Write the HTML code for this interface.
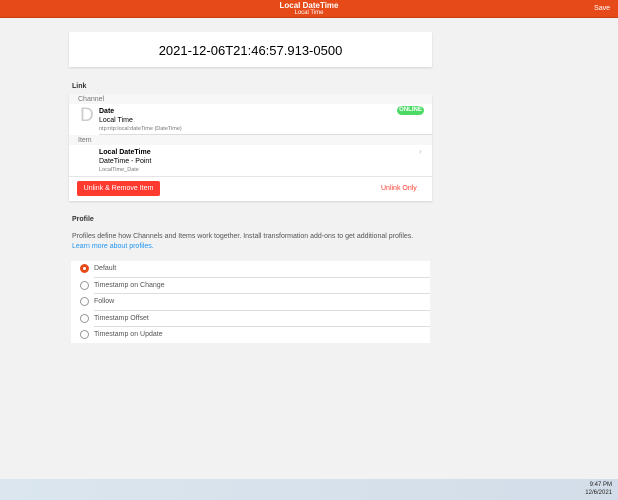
<!DOCTYPE html>
<html><head><style>
*{box-sizing:border-box;margin:0;padding:0}
body{width:618px;height:500px;background:#f2f2f2;font-family:"Liberation Sans",sans-serif;position:relative;overflow:hidden;color:#000}
.abs{position:absolute}
.hdr{left:0;top:0;width:618px;height:18px;background:#e64a19;border-bottom:1px solid #c63f12;color:#fff;text-align:center}
.card{background:#fff;box-shadow:0 1px 2px rgba(0,0,0,.12)}
.t{white-space:nowrap}
.radio{width:9px;height:9px;border:1px solid #999;border-radius:50%;background:#fff}
.rt{font-size:7px;color:#555;line-height:9px}
</style></head><body>
<div class="abs hdr">
 <div class="abs t" style="left:0;width:618px;top:1px;font-size:8px;font-weight:bold">Local DateTime</div>
 <div class="abs t" style="left:0;width:618px;top:10px;font-size:6px">Local Time</div>
 <div class="abs t" style="right:8px;top:5px;font-size:7px">Save</div>
</div>
<div class="abs card" style="left:69px;top:32px;width:363px;height:35px">
 <div class="abs t" style="left:0;width:363px;text-align:center;top:11px;font-size:13px">2021-12-06T21:46:57.913-0500</div>
</div>
<div class="abs t" style="left:72px;top:83px;font-size:7px;font-weight:bold;color:#333">Link</div>
<div class="abs card" style="left:69px;top:94px;width:363px;height:107px">
 <div class="abs" style="left:0;top:0;width:363px;height:10px;background:#f7f7f7"></div>
 <div class="abs t" style="left:9px;top:1.5px;font-size:7px;color:#777">Channel</div>
 <div class="abs t" style="left:11px;top:11px;font-size:19px;color:#ccc">D</div>
 <div class="abs t" style="left:30px;top:14px;font-size:7px;font-weight:bold">Date</div>
 <div class="abs t" style="left:30px;top:23px;font-size:7px">Local Time</div>
 <div class="abs t" style="left:30px;top:32px;font-size:5.5px;color:#777">ntp:ntp:local:dateTime (DateTime)</div>
 <div class="abs t" style="left:328px;top:12px;width:27px;height:9px;background:#4cd964;border-radius:5px;color:#fff;font-size:6px;font-weight:bold;text-align:center;line-height:9px">ONLINE</div>
 <div class="abs" style="left:30px;top:40px;width:333px;height:1px;background:#ddd"></div>
 <div class="abs" style="left:0;top:41px;width:363px;height:10px;background:#f7f7f7"></div>
 <div class="abs t" style="left:9px;top:42.5px;font-size:7px;color:#777">Item</div>
 <div class="abs t" style="left:30px;top:55px;font-size:7px;font-weight:bold">Local DateTime</div>
 <div class="abs t" style="left:30px;top:64px;font-size:7px">DateTime - Point</div>
 <div class="abs t" style="left:30px;top:73px;font-size:5.5px;color:#777">LocalTime_Date</div>
 <div class="abs t" style="left:350px;top:53px;font-size:8px;color:#bbb">›</div>
 <div class="abs" style="left:0;top:82px;width:363px;height:1px;background:#e5e5e5"></div>
 <div class="abs t" style="left:8px;top:87px;width:83px;height:15px;background:#ff3b30;border-radius:2px;color:#fff;font-size:7px;text-align:center;line-height:15px">Unlink &amp; Remove Item</div>
 <div class="abs t" style="left:312px;top:91px;font-size:7px;color:#ff3b30">Unlink Only</div>
</div>
<div class="abs t" style="left:72px;top:216px;font-size:7px;font-weight:bold;color:#333">Profile</div>
<div class="abs t" style="left:72px;top:233px;font-size:7px;color:#555">Profiles define how Channels and Items work together. Install transformation add-ons to get additional profiles.</div>
<div class="abs t" style="left:72px;top:243px;font-size:7px;color:#2196f3">Learn more about profiles.</div>
<div class="abs" style="left:71px;top:261px;width:359px;height:82px;background:#fff">
 <div class="abs radio" style="left:9px;top:3px;border:3px solid #e64a19"></div>
 <div class="abs t rt" style="left:23px;top:3px">Default</div>
 <div class="abs" style="left:23px;top:15.5px;width:336px;height:1px;background:#ddd"></div>
 <div class="abs radio" style="left:9px;top:19.5px"></div>
 <div class="abs t rt" style="left:23px;top:19.5px">Timestamp on Change</div>
 <div class="abs" style="left:23px;top:32px;width:336px;height:1px;background:#ddd"></div>
 <div class="abs radio" style="left:9px;top:36px"></div>
 <div class="abs t rt" style="left:23px;top:36px">Follow</div>
 <div class="abs" style="left:23px;top:48.5px;width:336px;height:1px;background:#ddd"></div>
 <div class="abs radio" style="left:9px;top:52.5px"></div>
 <div class="abs t rt" style="left:23px;top:52.5px">Timestamp Offset</div>
 <div class="abs" style="left:23px;top:65px;width:336px;height:1px;background:#ddd"></div>
 <div class="abs radio" style="left:9px;top:69px"></div>
 <div class="abs t rt" style="left:23px;top:69px">Timestamp on Update</div>
</div>
<div class="abs" style="left:0;top:479px;width:618px;height:21px;background:linear-gradient(90deg,#dbe6ee,#d3dde9)"></div>
<div class="abs t" style="right:6px;top:481px;font-size:6px;text-align:right;color:#222;line-height:8px">9:47 PM<br>12/6/2021</div>
</body></html>
